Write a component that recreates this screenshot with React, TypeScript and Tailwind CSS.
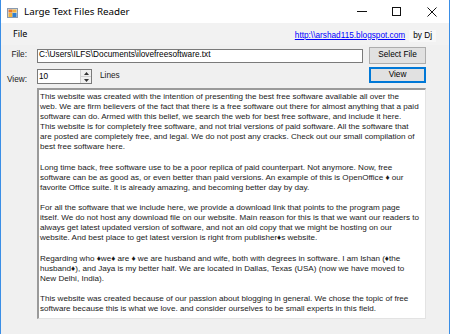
import React from 'react';

const LINES = [
  'This website was created with the intention of presenting the best free software available all over the',
  'web. We are firm believers of the fact that there is a free software out there for almost anything that a paid',
  'software can do. Armed with this belief, we search the web for best free software, and include it here.',
  'This website is for completely free software, and not trial versions of paid software. All the software that',
  'are posted are completely free, and legal. We do not post any cracks. Check out our small compilation of',
  'best free software here.',
  '',
  'Long time back, free software use to be a poor replica of paid counterpart. Not anymore. Now, free',
  'software can be as good as, or even better than paid versions. An example of this is OpenOffice \u2666 our',
  'favorite Office suite. It is already amazing, and becoming better day by day.',
  '',
  'For all the software that we include here, we provide a download link that points to the program page',
  'itself. We do not host any download file on our website. Main reason for this is that we want our readers to',
  'always get latest updated version of software, and not an old copy that we might be hosting on our',
  'website. And best place to get latest version is right from publisher\u2666s website.',
  '',
  'Regarding who \u2666we\u2666 are \u2666 we are husband and wife, both with degrees in software. I am Ishan (\u2666the',
  'husband\u2666), and Jaya is my better half. We are located in Dallas, Texas (USA) (now we have moved to',
  'New Delhi, India).',
  '',
  'This website was created because of our passion about blogging in general. We chose the topic of free',
  'software because this is what we love. and consider ourselves to be small experts in this field.',
];

function AppIcon() {
  return (
    <svg width="11" height="10" viewBox="0 0 11 10">
      <rect x="0.5" y="0.5" width="10" height="9" fill="#dfe7ef" stroke="#8a9bb0" />
      <rect x="1.5" y="1.5" width="4" height="3" fill="#e8742a" />
      <rect x="5.5" y="1.5" width="4" height="3" fill="#f3b23c" />
      <rect x="1.5" y="5" width="4" height="4" fill="#f3b23c" />
      <rect x="5.5" y="5" width="4" height="4" fill="#2f7fd1" />
    </svg>
  );
}

function TitleBar() {
  return (
    <div className="h-[23px] bg-white flex items-center shrink-0">
      <div className="ml-[6px] mt-[2px] flex items-center">
        <AppIcon />
      </div>
      <span className="ml-[6px] text-[9.8px] text-black leading-none" style={{ fontFamily: '"Noto Sans", "Open Sans", sans-serif' }}>
        Large Text Files Reader
      </span>
      <div className="ml-auto flex h-full">
        <div className="w-[35px] h-full flex items-center justify-center">
          <div className="w-[10px] h-px bg-[#111]" />
        </div>
        <div className="w-[35px] h-full flex items-center justify-center">
          <div className="w-[9px] h-[9px] border border-[#111]" />
        </div>
        <div className="w-[35px] h-full flex items-center justify-center">
          <svg width="10" height="10" viewBox="0 0 10 10">
            <path d="M0.5 0.5 L9.5 9.5 M9.5 0.5 L0.5 9.5" stroke="#111" strokeWidth="1" />
          </svg>
        </div>
      </div>
    </div>
  );
}

export default function App() {
  return (
    <div
      className="w-[450px] h-[334px] bg-[#f0f0f0] border-x border-[#3a8ee6] flex flex-col overflow-hidden text-black"
      style={{ fontFamily: '"Liberation Sans", Arial, sans-serif' }}
    >
      <TitleBar />

      {/* menu strip */}
      <div className="h-[22px] flex items-center shrink-0 bg-[#f2f2f2]">
        <span className="ml-[12px] text-[9px]" style={{ fontFamily: '"Noto Sans", "Open Sans", sans-serif' }}>
          File
        </span>
        <div className="ml-auto mr-[13px] mt-[4px] flex items-center">
          <span className="text-[8.25px] text-[#0000ff] underline leading-none">http:\\arshad115.blogspot.com</span>
          <span className="ml-[4px] px-[4px] h-[12px] flex items-center bg-[#f7f7f7] text-[8.25px] leading-none">by Dj</span>
        </div>
      </div>

      {/* file row */}
      <div className="flex items-center h-[17px] mt-[2px] shrink-0">
        <span className="w-[26px] text-right text-[8.25px] text-[#222]">File:</span>
        <div className="ml-[10px] w-[326px] h-[14px] bg-white border border-[#7a7a7a] flex items-center px-[1px] text-[8.25px] whitespace-nowrap">
          C:\Users\ILFS\Documents\ilovefreesoftware.txt
        </div>
        <button className="ml-[6px] w-[57px] h-[17px] bg-[#e1e1e1] border border-[#adadad] text-[8.25px] flex items-center justify-center">
          Select File
        </button>
      </div>

      {/* view row */}
      <div className="flex items-start h-[17px] mt-[3px] shrink-0">
        <span className="w-[26px] mt-[7px] text-right text-[8.25px] text-[#222] leading-[12px]">View:</span>
        <div className="ml-[10px] mt-[2px] w-[55px] h-[15px] bg-white border border-[#7a7a7a] flex">
          <span className="flex-1 px-[1px] text-[8.25px] leading-[13px]">10</span>
          <div className="w-[11px] h-full flex flex-col bg-[#f0f0f0] border-l border-[#d0d0d0]">
            <div className="flex-1 flex items-center justify-center border-b border-[#d0d0d0]">
              <svg width="5" height="3" viewBox="0 0 5 3"><path d="M0 3 L2.5 0 L5 3 Z" fill="#333" /></svg>
            </div>
            <div className="flex-1 flex items-center justify-center">
              <svg width="5" height="3" viewBox="0 0 5 3"><path d="M0 0 L2.5 3 L5 0 Z" fill="#333" /></svg>
            </div>
          </div>
        </div>
        <span className="ml-[8px] mt-[3px] text-[8.25px] leading-[12px] text-[#222]">Lines</span>
        <button className="ml-auto mr-[23px] w-[57px] h-[16px] bg-[#e1e1e1] border border-[#0078d7] shadow-[inset_0_0_0_1px_#0078d7] text-[8.25px] flex items-center justify-center">
          View
        </button>
      </div>

      {/* text area */}
      <div className="ml-[36px] mt-[4px] w-[389px] h-[231px] bg-white border-t-2 border-l-2 border-t-[#9a9a9a] border-l-[#9a9a9a] border-r border-b border-r-[#e3e3e3] border-b-[#e3e3e3] overflow-hidden shrink-0">
        <div className="pl-[1px] pt-[2px] text-[8.1px] leading-[10.1px] text-[#1a1a1a]">
          {LINES.map((line, i) => (
            <div key={i} className="whitespace-nowrap h-[10.1px]">
              {line || '\u00a0'}
            </div>
          ))}
        </div>
      </div>
    </div>
  );
}
